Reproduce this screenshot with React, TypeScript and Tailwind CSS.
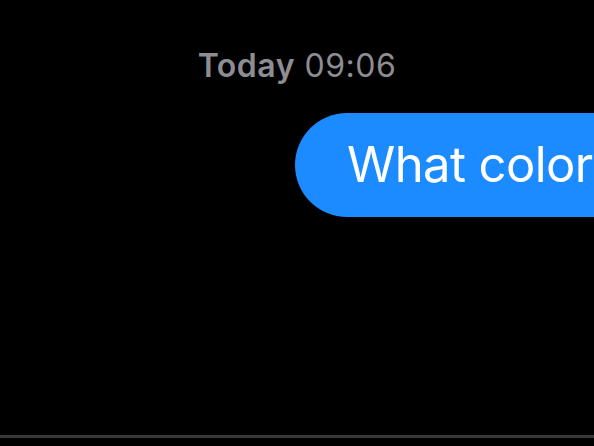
export default function App() {
  return (
    <div className="h-[446px] w-[594px] bg-black overflow-hidden flex flex-col font-['Inter','Liberation_Sans',sans-serif]">
      {/* timestamp */}
      <div className="pt-[46px] h-[113px] text-center text-[32px] leading-[40px] text-[#8d8d92] tracking-[0.5px]">
        <span className="font-semibold">Today</span> <span>09:06</span>
      </div>

      {/* outgoing bubble, runs past the right edge */}
      <div className="flex pl-[295px]">
        <div className="h-[104px] w-[400px] shrink-0 rounded-l-[52px] bg-[#1b8bff] pl-[52px] flex items-center">
          <span className="whitespace-nowrap text-white text-[49px] tracking-[-0.6px] leading-none pb-[2px]">What color</span>
        </div>
      </div>

      <div className="flex-1" />
      <div className="h-[3px] bg-[#373737] mb-[8px]" />
    </div>
  );
}
